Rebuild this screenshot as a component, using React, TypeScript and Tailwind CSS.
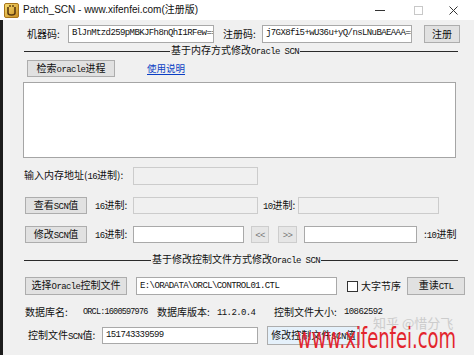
import React from 'react';

const cjk = "font-['Noto_Sans_CJK_SC',sans-serif]";
const monoCls = "font-['Liberation_Mono','Noto_Sans_CJK_SC',monospace] text-[9px] tracking-[-0.6px]";

function M({ children }: { children: React.ReactNode }) {
  return <span className={monoCls}>{children}</span>;
}

function Btn({ className = '', children }: { className?: string; children: React.ReactNode }) {
  return (
    <div
      className={`flex shrink-0 items-center justify-center whitespace-nowrap border border-[#adadad] bg-[#e1e1e1] text-[10px] leading-none text-[#111] ${className}`}
    >
      <span>{children}</span>
    </div>
  );
}

function Field({
  className = '',
  disabled = false,
  children,
}: {
  className?: string;
  disabled?: boolean;
  children?: React.ReactNode;
}) {
  return (
    <div
      className={`flex shrink-0 items-center overflow-hidden whitespace-nowrap border pl-[3px] leading-none text-[#111] ${
        disabled ? 'border-[#cccccc] bg-[#f0f0f0]' : 'border-[#a9a9a9] bg-white'
      } ${className}`}
    >
      {children && <span className={monoCls}>{children}</span>}
    </div>
  );
}

function Separator({ left, children }: { left: string; children: React.ReactNode }) {
  return (
    <div className="ml-[1px] flex h-[12px] w-[434px] items-center text-[10px] leading-none">
      <div className={`h-px bg-[#2a2a2a] ${left}`} />
      <span className="whitespace-nowrap px-[1px]">{children}</span>
      <div className="h-px flex-1 bg-[#2a2a2a]" />
    </div>
  );
}

function AppIcon() {
  return (
    <svg width="15" height="15" viewBox="0 0 15 15" className="ml-[4px] shrink-0">
      <defs>
        <linearGradient id="ic" x1="0" y1="0" x2="1" y2="1">
          <stop offset="0" stopColor="#f7dc72" />
          <stop offset="1" stopColor="#c98d1e" />
        </linearGradient>
      </defs>
      <rect x="0.5" y="0.5" width="14" height="14" rx="1.5" fill="url(#ic)" stroke="#a8741a" />
      <path d="M4 4 L4 10 Q4 12 7.5 12 Q11 12 11 10 L11 4" fill="none" stroke="#5a3a10" strokeWidth="1.6" />
      <circle cx="6" cy="3" r="0.9" fill="#5a3a10" />
      <circle cx="9" cy="3" r="0.9" fill="#5a3a10" />
    </svg>
  );
}

export default function App() {
  return (
    <div className={`relative flex h-[355px] w-[474px] flex-col overflow-hidden bg-[#f0f0f0] text-[#111] ${cjk}`}>
      {/* title bar */}
      <div className="flex h-[20px] shrink-0 items-center bg-white">
        <AppIcon />
        <span className="ml-[4px] whitespace-nowrap font-['Liberation_Sans','Noto_Sans_CJK_SC',sans-serif] text-[10px] leading-none text-[#111]">
          Patch_SCN - www.xifenfei.com(注册版)
        </span>
        <div className="ml-auto mr-[16px] flex items-center">
          <div className="h-px w-[10px] bg-[#333]" />
          <div className="ml-[29px] h-[9px] w-[9px] border border-[#c8c8c8]" />
          <svg width="9" height="9" viewBox="0 0 9 9" className="ml-[26px]">
            <path d="M0.5 0.5 L8.5 8.5 M8.5 0.5 L0.5 8.5" stroke="#333" strokeWidth="1" />
          </svg>
        </div>
      </div>

      {/* body */}
      <div className="flex flex-1 flex-col border-l-[3px] border-[#1c1c1c] pl-[20px]">
        <div className="mt-[4px] flex h-[19px] items-center text-[10px] leading-none">
          <span className="ml-[4px] w-[41px] shrink-0">机器码:</span>
          <Field className="h-[18px] w-[146px]">BlJnMtzd259pMBKJFh8nQhI1RFew==</Field>
          <span className="ml-[9px] w-[39px] shrink-0">注册码:</span>
          <Field className="h-[18px] w-[150px]">j7GX8fi5+wU36u+yQ/nsLNuBAEAAA==</Field>
          <Btn className="ml-[12px] h-[18px] w-[36px]">注册</Btn>
        </div>

        <div className="mt-[2px]">
          <Separator left="w-[146px]">
            基于内存方式修改<M>Oracle SCN</M>
          </Separator>
        </div>

        <div className="mt-[3px] flex h-[17px] items-center text-[10px] leading-none">
          <Btn className="ml-[4px] h-[17px] w-[88px]">
            检索<M>oracle</M>进程
          </Btn>
          <span className="ml-[32px] text-[9.5px] text-[#0b3fc4] underline underline-offset-2">使用说明</span>
        </div>

        <div className="mt-[5px] h-[76px] w-[433px] border border-[#a5a5a5] bg-white" />

        <div className="mt-[9px] flex h-[18px] items-center text-[10px] leading-none">
          <span className="ml-[1px] w-[109px] shrink-0 whitespace-nowrap">
            输入内存地址(<M>16</M>进制):
          </span>
          <Field disabled className="h-[18px] w-[125px]" />
        </div>

        <div className="mt-[12px] flex h-[17px] items-center text-[10px] leading-none">
          <Btn className="ml-[2px] h-[17px] w-[62px]">
            查看<M>SCN</M>值
          </Btn>
          <span className="ml-[8px] w-[38px] shrink-0 whitespace-nowrap">
            <M>16</M>进制:
          </span>
          <Field disabled className="h-[17px] w-[125px]" />
          <span className="ml-[5px] w-[35px] shrink-0 whitespace-nowrap">
            <M>10</M>进制:
          </span>
          <Field disabled className="h-[17px] w-[141px]" />
        </div>

        <div className="mt-[12px] flex h-[17px] items-center text-[10px] leading-none">
          <Btn className="ml-[2px] h-[17px] w-[62px]">
            修改<M>SCN</M>值
          </Btn>
          <span className="ml-[8px] w-[38px] shrink-0 whitespace-nowrap">
            <M>16</M>进制:
          </span>
          <Field className="h-[17px] w-[111px]" />
          <Btn className="ml-[7px] h-[17px] w-[18px] border-[#cdcdcd] bg-[#e6e6e6] text-[#777]">
            <M>&lt;&lt;</M>
          </Btn>
          <Btn className="ml-[9px] h-[17px] w-[19px] border-[#cdcdcd] bg-[#e6e6e6] text-[#777]">
            <M>&gt;&gt;</M>
          </Btn>
          <Field className="ml-[7px] h-[17px] w-[113px]" />
          <span className="ml-[7px] whitespace-nowrap">
            :<M>10</M>进制
          </span>
        </div>

        <div className="mt-[11px]">
          <Separator left="w-[127px]">
            基于修改控制文件方式修改<M>Oracle SCN</M>
          </Separator>
        </div>

        <div className="mt-[11px] flex h-[18px] items-center text-[10px] leading-none">
          <Btn className="ml-[2px] h-[18px] w-[102px]">
            选择<M>Oracle</M>控制文件
          </Btn>
          <Field className="ml-[9px] h-[18px] w-[201px]">E:\ORADATA\ORCL\CONTROL01.CTL</Field>
          <div className="ml-[10px] h-[11px] w-[11px] shrink-0 border border-[#333] bg-white" />
          <span className="ml-[3px] w-[46px] shrink-0">大字节序</span>
          <Btn className="h-[18px] w-[58px]">
            重读<M>CTL</M>
          </Btn>
        </div>

        <div className="mt-[10px] flex h-[14px] items-center whitespace-nowrap text-[10px] leading-none">
          <span className="ml-[2px] w-[58px] shrink-0">数据库名:</span>
          <span className="w-[74px] shrink-0 font-['Liberation_Mono',monospace] text-[8.5px] tracking-[-0.8px]">ORCL:1600597976</span>
          <span className="w-[60px] shrink-0">数据库版本:</span>
          <span className="w-[57px] shrink-0">
            <M>11.2.0.4</M>
          </span>
          <span className="w-[70px] shrink-0">控制文件大小:</span>
          <M>10862592</M>
        </div>

        <div className="mt-[7px] flex h-[19px] items-center text-[10px] leading-none">
          <span className="ml-[5px] w-[74px] shrink-0 whitespace-nowrap">
            控制文件<M>SCN</M>值:
          </span>
          <Field className="h-[17px] w-[156px]">151743339599</Field>
          <Btn className="ml-[9px] h-[19px] w-[93px] border-[#0078d7] bg-[#e5f1fb]">
            修改控制文件<M>SCN</M>值
          </Btn>
        </div>
      </div>

      {/* watermark */}
      <span className="absolute left-[373px] top-[316px] whitespace-nowrap text-[13px] leading-none text-[#c4c4c4] opacity-80">
        知乎 @惜分飞
      </span>
      <span className="absolute left-[297px] top-[324px] origin-left scale-x-[0.62] whitespace-nowrap font-['DejaVu_Sans',sans-serif] text-[29px] leading-none text-[#e3252d]">
        www.xifenfei.com
      </span>
    </div>
  );
}
